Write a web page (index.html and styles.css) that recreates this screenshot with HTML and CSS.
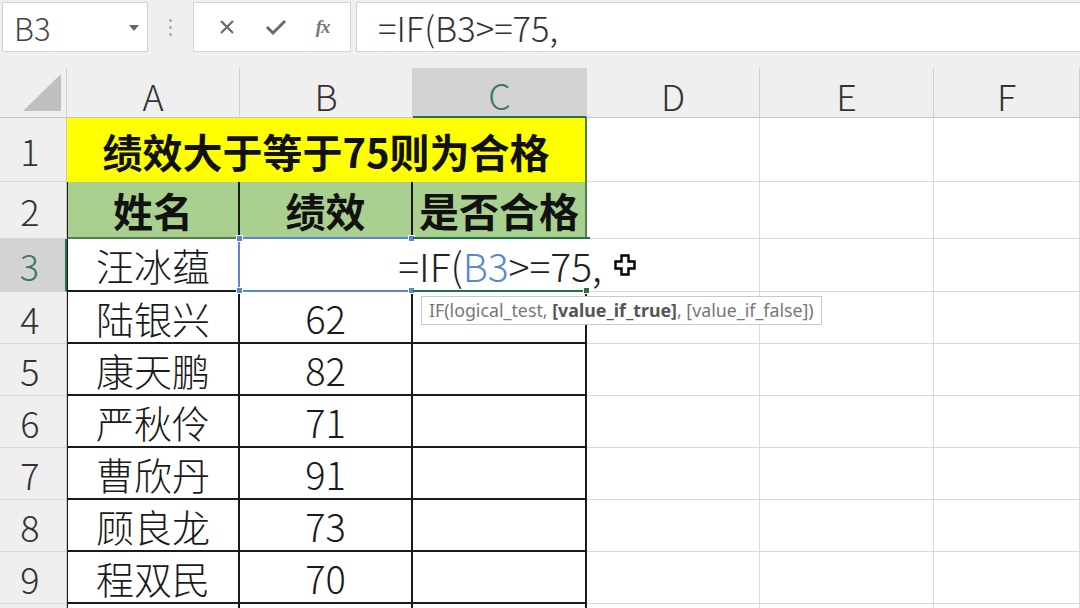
FILE: index.html
```html
<!DOCTYPE html>
<html lang="zh-CN">
<head>
<meta charset="utf-8">
<title>Excel IF</title>
<link rel="stylesheet" href="styles.css">
</head>
<body>
<div class="topbar">
  <div class="namebox">
    <span class="nb-text">B3</span>
    <svg class="nb-arrow" width="10" height="6" viewBox="0 0 10 6"><path d="M0 0 L10 0 L5 6 Z" fill="#666"/></svg>
  </div>
  <div class="grip"><span></span><span></span><span></span></div>
  <div class="fbtns">
    <svg class="ficon" width="18" height="18" viewBox="0 0 18 18"><path d="M3 3 L15 15 M15 3 L3 15" stroke="#6a6a6a" stroke-width="2.2" fill="none"/></svg>
    <svg class="ficon" width="22" height="18" viewBox="0 0 22 18"><path d="M2 9 L8 15 L20 3" stroke="#6a6a6a" stroke-width="3" fill="none"/></svg>
    <span class="fx">fx</span>
  </div>
  <div class="formula">=IF(B3&gt;=75,</div>
</div>

<div class="sheet">
  <!-- header row -->
  <div class="corner"><span class="tri"></span></div>
  <div class="ch">A</div>
  <div class="ch">B</div>
  <div class="ch sel">C</div>
  <div class="ch">D</div>
  <div class="ch">E</div>
  <div class="ch">F</div>

  <!-- row 1 -->
  <div class="rh">1</div>
  <div class="c title">绩效大于等于75则为合格</div>
  <div class="c"></div><div class="c"></div><div class="c"></div>

  <!-- row 2 -->
  <div class="rh">2</div>
  <div class="c hd a">姓名</div>
  <div class="c hd">绩效</div>
  <div class="c hd last">是否合格</div>
  <div class="c"></div><div class="c"></div><div class="c"></div>

  <!-- row 3 -->
  <div class="rh sel">3</div>
  <div class="c t a">汪冰蕴</div>
  <div class="c t ref">
    <div class="refbox">
      <i class="h tl"></i><i class="h tr"></i><i class="h bl"></i><i class="h br"></i>
    </div>
  </div>
  <div class="c t active">
    <div class="actbox"><i class="gh"></i></div>
    <div class="editor">=IF(<span class="refc">B3</span>&gt;=75,</div>
  </div>
  <div class="c curcell">
    <svg class="cursor" width="22" height="22" viewBox="0 0 22 22"><path d="M7.5 1.5 H14.5 V7.5 H20.5 V14.5 H14.5 V20.5 H7.5 V14.5 H1.5 V7.5 H7.5 Z" fill="#fff" stroke="#000" stroke-width="2.4"/></svg>
  </div>
  <div class="c"></div><div class="c"></div>

  <!-- row 4 -->
  <div class="rh">4</div>
  <div class="c t a">陆银兴</div>
  <div class="c t num">62</div>
  <div class="c t tipcell">
    <div class="tip">IF(logical_test, <b>[value_if_true]</b>, [value_if_false])</div>
  </div>
  <div class="c"></div><div class="c"></div><div class="c"></div>

  <!-- row 5 -->
  <div class="rh">5</div>
  <div class="c t a">康天鹏</div>
  <div class="c t num">82</div>
  <div class="c t"></div>
  <div class="c"></div><div class="c"></div><div class="c"></div>

  <!-- row 6 -->
  <div class="rh">6</div>
  <div class="c t a">严秋伶</div>
  <div class="c t num">71</div>
  <div class="c t"></div>
  <div class="c"></div><div class="c"></div><div class="c"></div>

  <!-- row 7 -->
  <div class="rh">7</div>
  <div class="c t a">曹欣丹</div>
  <div class="c t num">91</div>
  <div class="c t"></div>
  <div class="c"></div><div class="c"></div><div class="c"></div>

  <!-- row 8 -->
  <div class="rh">8</div>
  <div class="c t a">顾良龙</div>
  <div class="c t num">73</div>
  <div class="c t"></div>
  <div class="c"></div><div class="c"></div><div class="c"></div>

  <!-- row 9 -->
  <div class="rh">9</div>
  <div class="c t a">程双民</div>
  <div class="c t num">70</div>
  <div class="c t"></div>
  <div class="c"></div><div class="c"></div><div class="c"></div>

  <!-- row 10 (partial) -->
  <div class="rh"></div>
  <div class="c t a"></div>
  <div class="c t"></div>
  <div class="c t"></div>
  <div class="c"></div><div class="c"></div><div class="c"></div>
</div>
</body>
</html>
```
FILE: styles.css
```css
* { box-sizing: border-box; }
html, body {
  margin: 0;
  padding: 0;
  width: 1080px;
  height: 608px;
  overflow: hidden;
  background: #efefef;
  font-family: "Noto Sans CJK SC", "Noto Sans", sans-serif;
}

/* ---------- formula bar ---------- */
.topbar {
  height: 68px;
  display: flex;
  align-items: flex-start;
  padding: 2px 0 0 2px;
}
.namebox {
  width: 146px;
  height: 50px;
  background: #fff;
  border: 1px solid #d4d4d4;
  display: flex;
  align-items: center;
  justify-content: space-between;
  padding: 0 8px 0 11px;
}
.nb-text {
  font-size: 31px;
  color: #444;
  font-weight: 300;
  line-height: 1;
}
.nb-arrow { margin-top: 2px; }
.grip {
  width: 45px;
  height: 50px;
  display: flex;
  flex-direction: column;
  align-items: center;
  justify-content: center;
  gap: 4px;
}
.grip span {
  width: 3px;
  height: 3px;
  background: #a8a8a8;
  border-radius: 50%;
}
.fbtns {
  width: 158px;
  height: 50px;
  background: #fff;
  border: 1px solid #d4d4d4;
  display: flex;
  align-items: center;
  justify-content: space-around;
  padding: 0 6px 0 10px;
}
.fx {
  font-family: "Liberation Serif", serif;
  font-style: italic;
  font-weight: bold;
  font-size: 19px;
  color: #777;
  letter-spacing: -1px;
}
.formula {
  flex: 1;
  margin-left: 5px;
  height: 50px;
  background: #fff;
  border: 1px solid #d4d4d4;
  border-right: none;
  font-size: 34.5px;
  font-weight: 300;
  color: #333;
  line-height: 48px;
  padding-left: 21px;
}

/* ---------- sheet grid ---------- */
.sheet {
  display: grid;
  grid-template-columns: 67px 173px 173px 174px 173px 174px 146px;
  grid-template-rows: 50px 64px 57px 53px repeat(6, 52px) 8px;
  background: #fff;
}
.corner {
  background: #efefef;
  border-right: 1px solid #cfcfcf;
  border-bottom: 1px solid #c6c6c6;
  position: relative;
}
.tri {
  position: absolute;
  right: 5px;
  bottom: 6px;
  width: 0;
  height: 0;
  border-left: 38px solid transparent;
  border-bottom: 37px solid #bfbfbf;
}
.ch {
  background: #efefef;
  border-right: 1px solid #d0d0d0;
  border-bottom: 1px solid #c6c6c6;
  display: flex;
  align-items: center;
  justify-content: center;
  font-size: 36px;
  font-weight: 300;
  color: #333;
  padding-top: 4px;
}
.ch.sel {
  background: #d3d3d3;
  color: #3b7a57;
  border-bottom: 2px solid #217346;
}
.rh {
  background: #efefef;
  border-right: 1px solid #c8c8c8;
  border-bottom: 1px solid #d6d6d6;
  display: flex;
  align-items: center;
  justify-content: center;
  font-size: 36px;
  font-weight: 300;
  color: #333;
  padding-right: 6px;
}
.rh.sel {
  background: #d3d3d3;
  color: #3b7a57;
  border-right: 2px solid #217346;
}

.c {
  border-right: 1px solid #dadada;
  border-bottom: 1px solid #dadada;
  display: flex;
  align-items: center;
  justify-content: center;
  font-size: 38px;
  font-weight: 300;
  color: #1a1a1a;
  position: relative;
  white-space: nowrap;
}
.title {
  grid-column: span 3;
  background: #ffff00;
  font-weight: 700;
  font-size: 40px;
  color: #111;
  border-right: 2px solid #4f7f4f;
  border-bottom: none;
  padding-top: 2px;
}
.hd {
  background: #a9d08e;
  font-weight: 700;
  font-size: 40px;
  color: #111;
  border-right: 2px solid #1a1a1a;
  border-bottom: 2px solid #4f7f4f;
}
.hd.last { border-right: 2px solid #4f7f4f; }
.t {
  border-right: 2px solid #1a1a1a;
  border-bottom: 2px solid #1a1a1a;
}
.a { border-left: 1px solid #1a1a1a; }
.num { font-size: 38px; }

/* referenced cell B3 */
.refbox {
  position: absolute;
  left: -2px;
  top: -2px;
  right: -2px;
  bottom: -2px;
  border: 2px solid #5a87d3;
  z-index: 2;
}
.h {
  position: absolute;
  width: 7px;
  height: 7px;
  background: #5a87d3;
  border: 1px solid #fff;
}
.h.tl { left: -4px; top: -4px; }
.h.tr { right: -4px; top: -4px; }
.h.bl { left: -4px; bottom: -4px; }
.h.br { right: -4px; bottom: -4px; }

/* active cell C3 */
.active { border-right: none; }
.actbox {
  position: absolute;
  left: 0;
  right: -3px;
  top: -2px;
  bottom: -2px;
  border-top: 2px solid #217346;
  border-bottom: 2px solid #217346;
  z-index: 2;
}
.gh {
  position: absolute;
  right: 0;
  bottom: -4px;
  width: 7px;
  height: 7px;
  background: #217346;
  border: 1px solid #fff;
}
.editor {
  position: absolute;
  top: 3px;
  bottom: 3px;
  left: 50%;
  transform: translateX(-50%);
  background: #fff;
  padding: 0 8px;
  z-index: 3;
  font-size: 39px;
  font-weight: 300;
  color: #222;
  display: flex;
  align-items: center;
  white-space: nowrap;
}
.refc { color: #5a87d3; }

.cursor {
  position: absolute;
  left: 27px;
  top: 15px;
  z-index: 4;
}

/* tooltip */
.tipcell { align-items: flex-start; }
.tip {
  position: absolute;
  left: 8px;
  top: 4px;
  height: 29px;
  padding: 0 7px;
  background: #fff;
  border: 1px solid #c9c9c9;
  font-family: "Noto Sans", "Open Sans", sans-serif;
  font-size: 17.8px;
  font-weight: 400;
  color: #777;
  line-height: 27px;
  white-space: nowrap;
  z-index: 5;
  letter-spacing: 0;
}
.tip b { color: #555; font-weight: 700; }
```
